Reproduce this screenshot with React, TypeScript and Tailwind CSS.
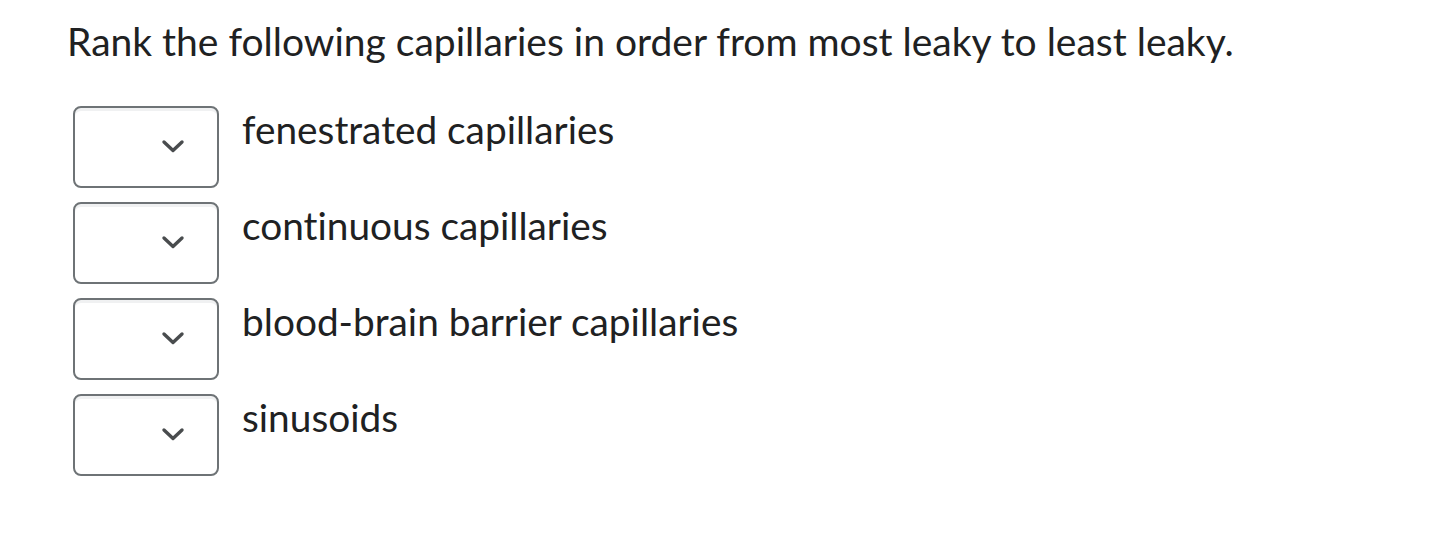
const items = [
  "fenestrated capillaries",
  "continuous capillaries",
  "blood-brain barrier capillaries",
  "sinusoids",
];

function RankSelect() {
  return (
    <div className="relative h-[82px] w-[146px] shrink-0 rounded-[8px] border-2 border-[#6e7376] bg-white shadow-[inset_0_3px_0_#f0f1f2]">
      <svg
        className="absolute left-[86px] top-[31px]"
        width="24"
        height="15"
        viewBox="0 0 24 15"
        fill="none"
        stroke="#494c4e"
        strokeWidth="3.4"
        strokeLinecap="round"
        strokeLinejoin="round"
      >
        <polyline points="3,3 12,11.5 21,3" />
      </svg>
    </div>
  );
}

export default function App() {
  return (
    <div className="min-h-[557px] bg-white pl-[67px] pt-[16px] font-['Lato',sans-serif] text-[#202122] [font-variant-ligatures:none]">
      <h1 className="text-[39px] leading-[50px]">
        Rank the following capillaries in order from most leaky to least leaky.
      </h1>
      <div className="mt-[40px] flex flex-col gap-[14px] pl-[6px]">
        {items.map((label) => (
          <div key={label} className="flex items-start gap-[23px]">
            <RankSelect />
            <span className="text-[38.8px] leading-[46px]">{label}</span>
          </div>
        ))}
      </div>
    </div>
  );
}
